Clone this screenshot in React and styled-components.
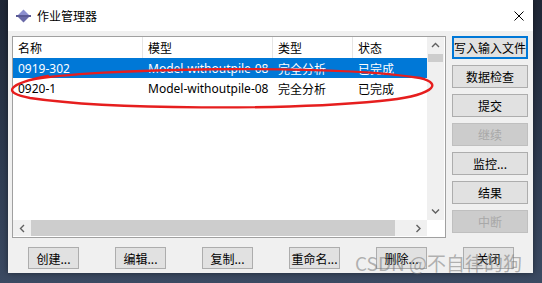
import React from 'react';
import styled, { createGlobalStyle } from 'styled-components';

const GlobalStyle = createGlobalStyle`
  html, body {
    margin: 0;
    padding: 0;
  }
  body {
    background: linear-gradient(180deg, #1f2736 0%, #2f3c52 60%, #3b4a62 100%);
    font-family: "Noto Sans CJK SC", "Noto Sans", sans-serif;
  }
`;

const Page = styled.div`
  position: relative;
  width: 542px;
  height: 283px;
  overflow: hidden;
`;

const Window = styled.div`
  margin-left: 8px;
  width: 525px;
  height: 273px;
  background: #f0f0f0;
  display: flex;
  flex-direction: column;
  box-shadow: 0 0 6px rgba(0, 0, 0, 0.45);
`;

const TitleBar = styled.div`
  height: 31px;
  background: #ffffff;
  display: flex;
  align-items: center;
  padding: 0 9px 0 8px;
  box-sizing: border-box;
`;

const Title = styled.span`
  margin-left: 6px;
  font-size: 12px;
  color: #000;
  line-height: 1;
`;

const CloseButton = styled.div`
  margin-left: auto;
  width: 10px;
  height: 10px;
  display: flex;
`;

const Body = styled.div`
  flex: 1;
  display: flex;
  flex-direction: column;
  padding: 5px 5px 4px 4px;
`;

const Main = styled.div`
  display: flex;
  gap: 6px;
  height: 202px;
`;

const ListBox = styled.div`
  width: 434px;
  height: 202px;
  box-sizing: border-box;
  border: 1px solid #a0a0a0;
  background: #ffffff;
  padding-right: 1px;
  display: grid;
  grid-template-columns: 1fr 17px;
  grid-template-rows: 1fr 17px;
`;

const Table = styled.div`
  overflow: hidden;
`;

const Row = styled.div`
  display: grid;
  grid-template-columns: 130px 130px 80px 74px;
  height: ${(p) => (p.$header ? 21 : 20)}px;
  background: ${(p) => (p.$selected ? '#0078d7' : '#ffffff')};
  color: ${(p) => (p.$selected ? '#ffffff' : '#000000')};
`;

const Cell = styled.div`
  display: flex;
  align-items: center;
  padding-left: 5px;
  white-space: nowrap;
  overflow: hidden;
  font-size: 12px;
  font-family: ${(p) =>
    p.$latin
      ? '"Noto Sans", "Noto Sans CJK SC", sans-serif'
      : '"Noto Sans CJK SC", "Noto Sans", sans-serif'};
  border-right: ${(p) => (p.$header ? '1px solid #e5e5e5' : 'none')};
`;

const VScroll = styled.div`
  background: #f0f0f0;
  display: flex;
  flex-direction: column;
  align-items: center;
`;

const HScroll = styled.div`
  background: #f0f0f0;
  display: flex;
  align-items: center;
  height: 16px;
`;

const Corner = styled.div`
  background: #ffffff;
`;

const ArrowBox = styled.div`
  width: ${(p) => (p.$h ? 18 : 17)}px;
  height: ${(p) => (p.$h ? 16 : 17)}px;
  display: flex;
  align-items: center;
  justify-content: center;
  flex-shrink: 0;
`;

const Thumb = styled.div`
  background: #cdcdcd;
  ${(p) =>
    p.$h
      ? 'height: 16px; width: 364px;'
      : 'width: 15px; height: 8px;'}
`;

const Spacer = styled.div`
  flex: 1;
`;

const SideButtons = styled.div`
  width: 76px;
  display: flex;
  flex-direction: column;
  gap: 6px;
`;

const Button = styled.div`
  box-sizing: border-box;
  height: ${(p) => (p.$bottom ? 22 : 23)}px;
  width: ${(p) => (p.$bottom ? '51px' : '100%')};
  display: flex;
  align-items: center;
  justify-content: center;
  font-size: 12px;
  white-space: nowrap;
  color: ${(p) => (p.$disabled ? '#a8a8a8' : '#000000')};
  background: ${(p) => (p.$disabled ? '#cccccc' : '#e1e1e1')};
  border: ${(p) =>
    p.$focus ? '2px solid #0078d7' : p.$disabled ? '1px solid #bfbfbf' : '1px solid #adadad'};
`;

const BottomBar = styled.div`
  display: flex;
  gap: 36px;
  margin-top: 9px;
  padding-left: 16px;
`;

const Annotation = styled.svg`
  position: absolute;
  left: 0;
  top: 0;
  pointer-events: none;
`;

const Watermark = styled.div`
  position: absolute;
  left: 355px;
  top: 249px;
  font-size: 19px;
  font-family: "Noto Sans CJK SC", "Noto Sans", sans-serif;
  color: rgba(120, 120, 120, 0.55);
  white-space: nowrap;
  pointer-events: none;
`;

const AppIcon = () => (
  <svg width="15" height="14" viewBox="0 0 15 14">
    <polygon points="2,6 7.5,0.5 13,6" fill="#8c8fcf" />
    <polygon points="2,8 7.5,13.5 13,8" fill="#6a6aa8" />
    <rect x="0" y="6" width="15" height="2" fill="#5a5a96" />
  </svg>
);

const Chevron = ({ dir }) => {
  const pts = {
    up: '1,5 4.5,1.5 8,5',
    down: '1,1.5 4.5,5 8,1.5',
    left: '5,1 1.5,4.5 5,8',
    right: '1.5,1 5,4.5 1.5,8',
  }[dir];
  const vertical = dir === 'up' || dir === 'down';
  return (
    <svg width={vertical ? 9 : 7} height={vertical ? 7 : 9}>
      <polyline points={pts} fill="none" stroke="#606060" strokeWidth="1.4" />
    </svg>
  );
};

const rows = [
  { name: '0919-302', model: 'Model-withoutpile-08', type: '完全分析', status: '已完成', selected: true },
  { name: '0920-1', model: 'Model-withoutpile-08', type: '完全分析', status: '已完成' },
];

const sideButtons = [
  { label: '写入输入文件', focus: true },
  { label: '数据检查' },
  { label: '提交' },
  { label: '继续', disabled: true },
  { label: '监控...' },
  { label: '结果' },
  { label: '中断', disabled: true },
];

const bottomButtons = ['创建...', '编辑...', '复制...', '重命名...', '删除...', '关闭'];

const App = () => {
  return (
    <Page>
      <GlobalStyle />
      <Window>
        <TitleBar>
          <AppIcon />
          <Title>作业管理器</Title>
          <CloseButton>
            <svg width="10" height="10" viewBox="0 0 10 10">
              <path d="M0.5 0.5 L9.5 9.5 M9.5 0.5 L0.5 9.5" stroke="#000" strokeWidth="1" />
            </svg>
          </CloseButton>
        </TitleBar>
        <Body>
          <Main>
            <ListBox>
              <Table>
                <Row $header>
                  <Cell $header>名称</Cell>
                  <Cell $header>模型</Cell>
                  <Cell $header>类型</Cell>
                  <Cell>状态</Cell>
                </Row>
                {rows.map((r) => (
                  <Row key={r.name} $selected={r.selected}>
                    <Cell $latin>{r.name}</Cell>
                    <Cell $latin>{r.model}</Cell>
                    <Cell>{r.type}</Cell>
                    <Cell>{r.status}</Cell>
                  </Row>
                ))}
              </Table>
              <VScroll>
                <ArrowBox>
                  <Chevron dir="up" />
                </ArrowBox>
                <Thumb />
                <Spacer />
                <ArrowBox>
                  <Chevron dir="down" />
                </ArrowBox>
              </VScroll>
              <HScroll>
                <ArrowBox $h>
                  <Chevron dir="left" />
                </ArrowBox>
                <Thumb $h />
                <Spacer />
                <ArrowBox $h>
                  <Chevron dir="right" />
                </ArrowBox>
              </HScroll>
              <Corner />
            </ListBox>
            <SideButtons>
              {sideButtons.map((b) => (
                <Button key={b.label} $focus={b.focus} $disabled={b.disabled}>
                  {b.label}
                </Button>
              ))}
            </SideButtons>
          </Main>
          <BottomBar>
            {bottomButtons.map((label) => (
              <Button key={label} $bottom>
                {label}
              </Button>
            ))}
          </BottomBar>
        </Body>
      </Window>
      <Annotation width="542" height="283">
        <path
          d="M30 80 C 90 68, 330 64, 420 78 C 445 84, 432 96, 380 101 C 290 110, 110 110, 30 98 C 2 93, 6 84, 48 76"
          fill="none"
          stroke="#e61e1e"
          strokeWidth="2.4"
          strokeLinecap="round"
        />
      </Annotation>
      <Watermark>CSDN @不自律的狗</Watermark>
    </Page>
  );
};

export default App;
